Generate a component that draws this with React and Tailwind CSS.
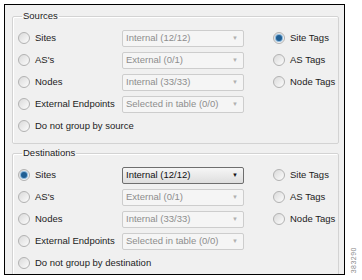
import React from "react";

const font = { fontFamily: '"Liberation Sans", Arial, sans-serif' };

function Radio({ checked }) {
  return (
    <span className="relative flex h-[12px] w-[12px] shrink-0 items-center justify-center rounded-full border border-[#b2b2b2] bg-gradient-to-br from-[#dadada] to-[#fcfcfc]">
      {checked && (
        <span className="h-[6px] w-[6px] rounded-full bg-[#1f5e93] shadow-[0_0_0_1px_#8bb8dc]" />
      )}
    </span>
  );
}

function Option({ checked, label, className = "" }) {
  return (
    <div className={`flex items-center gap-[5px] ${className}`}>
      <Radio checked={checked} />
      <span className="text-[9.5px] leading-none text-[#1c1c1c]">{label}</span>
    </div>
  );
}

function Dropdown({ value, active }) {
  return (
    <div
      className={`flex h-[17px] w-[122px] items-center justify-between rounded-[2px] border pl-[3px] pr-[5px] text-[9.5px] leading-none ${
        active
          ? "border-[#6e6e6e] bg-gradient-to-b from-[#f6f6f6] to-[#dedede] text-[#111]"
          : "border-[#cdcdcd] bg-[#f5f5f5] text-[#8d8d8d]"
      }`}
    >
      <span>{value}</span>
      <span className={`text-[6px] ${active ? "text-[#111]" : "text-[#b0b0b0]"}`}>▼</span>
    </div>
  );
}

function Group({ title, subject, selected, active }) {
  const rows = [
    ["Sites", "Internal (12/12)", "Site Tags"],
    ["AS's", "External (0/1)", "AS Tags"],
    ["Nodes", "Internal (33/33)", "Node Tags"],
    ["External Endpoints", "Selected in table (0/0)", null],
  ];
  return (
    <fieldset className="w-[327px] shrink-0 rounded-[2px] border border-[#d3d3d3] pb-[6px] pl-[5px] shadow-[inset_1px_1px_0_#fff]">
      <legend className="ml-[4px] px-[1px] text-[9.5px] leading-[12px] text-[#1c1c1c]">{title}</legend>
      <div className="pt-[5px]">
        {rows.map(([label, value, tag], i) => (
          <div key={label} className="flex h-[22px] items-center">
            <Option checked={selected === i} label={label} className="w-[104px]" />
            <Dropdown value={value} active={active === i} />
            {tag && <Option checked={tag === "Site Tags" && title === "Sources"} label={tag} className="ml-[29px]" />}
          </div>
        ))}
        <div className="flex h-[22px] items-center">
          <Option checked={false} label={`Do not group by ${subject}`} />
        </div>
      </div>
    </fieldset>
  );
}

export default function App() {
  return (
    <div className="flex h-[280px] w-[362px] bg-white" style={font}>
      <div className="ml-[4px] mt-[4px] flex h-[271px] w-[341px] flex-col gap-[3px] overflow-hidden border border-black bg-[#f0f0f0] pl-[7px] pt-[5px]">
        <Group title="Sources" subject="source" selected={-1} active={-1} />
        <Group title="Destinations" subject="destination" selected={0} active={0} />
      </div>
      <div className="flex flex-1 items-end justify-center pb-[7px]">
        <span className="rotate-180 text-[7px] leading-none tracking-[0.5px] text-[#8a8a8a] [writing-mode:vertical-rl]">
          383290
        </span>
      </div>
    </div>
  );
}
